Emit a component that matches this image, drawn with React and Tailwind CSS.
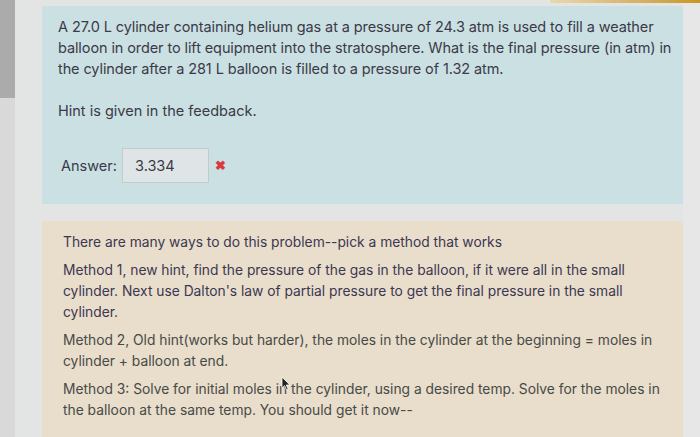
import React from "react";

const FONT = { fontFamily: "Inter, 'Liberation Sans', sans-serif" };

function Cursor() {
  return (
    <svg
      className="absolute left-[281px] top-[376px]"
      width="10"
      height="15"
      viewBox="0 0 10 15"
    >
      <path d="M1 1 L1 12 L3.6 9.6 L5.6 14 L7.2 13.3 L5.3 9 L8.8 9 Z" fill="#222" stroke="#fff" strokeWidth="0.8" />
    </svg>
  );
}

export default function App() {
  return (
    <div
      className="relative h-[437px] w-[700px] overflow-hidden whitespace-nowrap bg-[#e3e5e4] text-[14.5px] leading-[21px] text-[#3a3a48]"
      style={FONT}
    >
      <div className="absolute right-0 top-0 h-[3px] w-[150px] bg-gradient-to-r from-[#e8d8b0] to-[#c9961f]" />
      <div className="flex h-full">
        <div className="flex w-[15px] shrink-0 flex-col">
          <div className="h-[98px] bg-[#ababab]" />
          <div className="flex-1 bg-[#d8d9d8]" />
        </div>
        <div className="flex w-[668px] flex-col pl-[27px] pt-[6px]">
          <div className="h-[198px] bg-[#cbe0e3] pl-[16px] pr-[10px] pt-[10px]">
            <p className="tracking-[-0.1px]">
              A 27.0 L cylinder containing helium gas at a pressure of 24.3 atm is used to fill a weather
              <br />
              balloon in order to lift equipment into the stratosphere. What is the final pressure (in atm) in
              <br />
              the cylinder after a 281 L balloon is filled to a pressure of 1.32 atm.
            </p>
            <p className="mt-[21px]">Hint is given in the feedback.</p>
            <div className="mt-[27px] flex items-center">
              <span className="ml-[3px] w-[61px]">Answer:</span>
              <div className="flex h-[35px] w-[87px] items-center border border-[#c5cbcb] bg-[#dfe5e6] pl-[12px]">
                3.334
              </div>
              <span className="ml-[6px] text-[13px] font-bold text-[#d8383e]">✖</span>
            </div>
          </div>
          <div className="mt-[17px] flex-1 bg-[#e9ddcc] pl-[21px] pr-[10px] pt-[11px] text-[13.8px] text-[#3b3850]">
            <p>There are many ways to do this problem--pick a method that works</p>
            <p className="mt-[7px]">
              Method 1, new hint, find the pressure of the gas in the balloon, if it were all in the small
              <br />
              cylinder. Next use Dalton's law of partial pressure to get the final pressure in the small
              <br />
              cylinder.
            </p>
            <p className="mt-[7px] text-[#474a45]">
              Method 2, Old hint(works but harder), the moles in the cylinder at the beginning = moles in
              <br />
              cylinder + balloon at end.
            </p>
            <p className="mt-[7px] text-[#474a45]">
              Method 3: Solve for initial moles in the cylinder, using a desired temp. Solve for the moles in
              <br />
              the balloon at the same temp. You should get it now--
            </p>
          </div>
        </div>
        <div className="flex-1 bg-[#e6e7e6]" />
      </div>
      <Cursor />
    </div>
  );
}
